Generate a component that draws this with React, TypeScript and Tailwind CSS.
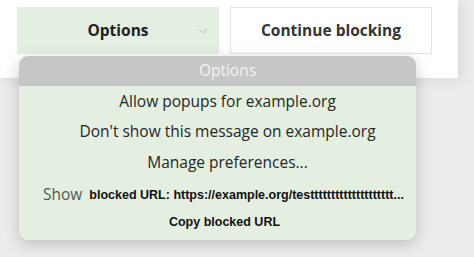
import { ChevronDown } from 'lucide-react';

const MENU_ITEMS = [
  { label: 'Allow popups for example.org', h: 'h-[30px]' },
  { label: "Don't show this message on example.org", h: 'h-[29px]' },
  { label: 'Manage preferences...', h: 'h-[33px]' },
];

function OptionsMenu() {
  return (
    <div className="absolute left-[19px] top-[56px] w-[397px] rounded-[9px] bg-[#e4efe2] shadow-[0_4px_16px_rgba(0,0,0,0.2)] overflow-hidden">
      <div className="h-[30px] bg-[#c6c6c6] flex items-center justify-center pl-[20px] text-[15.5px] text-[#f2f2f2]">
        Options
      </div>
      <div className="flex flex-col items-center pt-[1px] pb-[7px] pl-[20px] text-[15.5px] text-[#262626]">
        {MENU_ITEMS.map(item => (
          <div key={item.label} className={`${item.h} flex items-center`}>{item.label}</div>
        ))}
        <div className="h-[32px] flex items-center w-full pl-[4px]">
          <span className="text-[#555] mr-[7px]">Show</span>
          <span className="font-['Liberation_Sans',Arial,sans-serif] font-bold text-[12.5px] text-[#111] whitespace-nowrap">
            blocked URL: https://example.org/testttttttttttttttttttt...
          </span>
        </div>
        <div className="h-[22px] flex items-center pr-[6px] font-['Liberation_Sans',Arial,sans-serif] font-bold text-[12.5px] text-[#111]">
          Copy blocked URL
        </div>
      </div>
    </div>
  );
}

export default function App() {
  return (
    <div className="relative w-[474px] h-[257px] bg-[#ececec] overflow-hidden font-['Open_Sans',sans-serif]">
      <div className="w-[458px] h-[78px] bg-white shadow-[4px_2px_12px_rgba(0,0,0,0.08)] flex gap-[11px] pl-[17px] pt-[7px]">
        <button className="relative w-[202px] h-[47px] bg-[#e3efe1] flex items-center justify-center text-[15.5px] font-bold text-[#222]">
          Options
          <ChevronDown className="absolute right-[9px] top-[17px] w-[14px] h-[14px] text-[#aab3a9]" strokeWidth={1.5} />
        </button>
        <button className="w-[202px] h-[47px] bg-white border border-[#e2e2e2] flex items-center justify-center text-[15.5px] font-bold text-[#333]">
          Continue blocking
        </button>
      </div>
      <OptionsMenu />
    </div>
  );
}
